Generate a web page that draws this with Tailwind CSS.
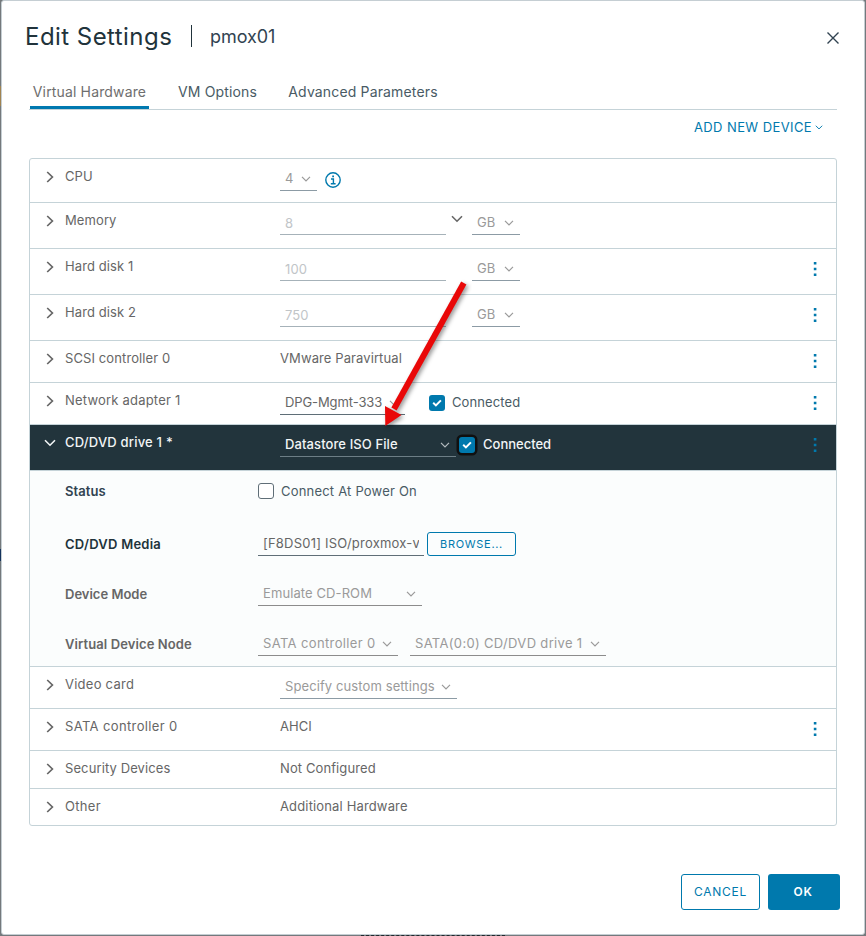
<!DOCTYPE html>
<html lang="en">
<head>
  <meta charset="UTF-8" />
  <meta name="viewport" content="width=device-width, initial-scale=1.0" />
  <title>Edit Settings</title>
  <script src="https://cdn.jsdelivr.net/npm/@tailwindcss/browser@4"></script>
</head>
<body class="relative h-[936px] w-[866px] overflow-hidden bg-[#74797c] px-px pb-px font-['Inter',sans-serif] text-[13px] leading-[18px] tracking-[0.1px] text-[#666]">
  <!-- Shared icons -->
  <svg class="hidden">
    <symbol id="right" viewBox="0 0 8 12"><path d="M1.2 1l5.2 5-5.2 5" fill="none" stroke="currentColor" stroke-width="1.7" /></symbol>
    <symbol id="down" viewBox="0 0 12 8"><path d="M1 1.2l5 5 5-5" fill="none" stroke="currentColor" stroke-width="1.6" /></symbol>
    <symbol id="caret" viewBox="0 0 10 6"><path d="M1 .8l4 4 4-4" fill="none" stroke="currentColor" stroke-width="1.2" /></symbol>
    <symbol id="dots" viewBox="0 0 4 16"><path d="M.8 1h2.6v2.4H.8zM.8 6.8h2.6v2.4H.8zM.8 12.6h2.6V15H.8z" fill="currentColor" /></symbol>
    <symbol id="check" viewBox="0 0 16 16"><path d="M4.2 7.8l2.7 2.6 5-5" fill="none" stroke="#fff" stroke-width="2" /></symbol>
  </svg>

  <div class="h-[935px] rounded-[3px] border border-[#c5ced3] bg-white pl-[27px]">
    <!-- Header -->
    <div class="flex h-[72px] items-center pr-[25px]">
      <h1 class="-ml-1 w-[166px] whitespace-nowrap text-2xl tracking-[0.45px] text-[#21333b]">Edit Settings</h1>
      <div class="mb-0.5 h-[22px] w-px bg-[#21333b]"></div>
      <span class="ml-[18px] text-lg tracking-[-0.05px] text-[#314351]">pmox01</span>
      <svg class="mt-px ml-auto size-3 text-[#314351]" viewBox="0 0 12 12"><path d="M.5.5l11 11M11.5.5l-11 11" stroke="currentColor" stroke-width="1.4" /></svg>
    </div>

    <!-- Tabs -->
    <div class="flex h-[37px] w-[808px] gap-[27px] border-b border-[#c5d3d8] pl-px text-sm tracking-[0.15px] text-[#495b65]">
      <div class="flex h-9 w-[119px] items-center justify-center whitespace-nowrap border-b-[3px] border-[#0079b0] pt-[5px] text-[#6e6e6e]">Virtual Hardware</div>
      <div class="flex h-9 w-[83px] items-center justify-center whitespace-nowrap pt-0.5">VM Options</div>
      <div class="flex h-9 w-[154px] items-center justify-center whitespace-nowrap pt-0.5">Advanced Parameters</div>
    </div>
    <div class="flex h-[48px] w-[808px] items-start justify-end pt-2 pr-3.5 tracking-[0.4px] text-[#0079ad]">
      <span>ADD NEW DEVICE</span><svg class="mt-[7px] ml-[3px] h-[5px] w-2"><use href="#caret" /></svg>
    </div>

    <!-- Devices -->
    <div class="w-[808px] rounded-[3px] border border-[#c5d3d8]">
      <div class="flex h-11 border-b border-[#c5d3d8] pl-4 pt-2">
        <svg class="mt-1 h-3 w-2"><use href="#right" /></svg>
        <div class="ml-[11px] w-[215px]">CPU</div>
        <div class="flex h-6 w-[37px] items-center justify-between border-b border-[#8c9ba5] pr-1.5 pb-px pl-[5px] text-[#9a9a9a]">4<svg class="mt-px h-1.5 w-2.5"><use href="#caret" /></svg></div>
        <svg class="ml-2 mt-[5px] size-4 text-[#0079ad]" viewBox="0 0 16 16" fill="none" stroke="currentColor" stroke-width="1.4"><circle cx="8" cy="8" r="7.2" /><path d="M6 7h2.4v4.5M5.8 11.8h4.8" /><path d="M7.2 4.4h1.8" stroke-width="1.8" /></svg>
      </div>
      <div class="flex h-[46px] border-b border-[#c5d3d8] pl-4 pt-2">
        <svg class="mt-1 h-3 w-2"><use href="#right" /></svg>
        <div class="ml-[11px] w-[215px]">Memory</div>
        <div class="flex h-6 w-[166px] items-center border-b border-[#a6b2b9] pl-[5px] text-[#c1c5c8]">8</div>
        <svg class="mt-1 ml-[5px] h-2 w-3"><use href="#down" /></svg>
        <div class="ml-[9px] flex h-6 w-12 items-center justify-between border-b border-[#8c9ba5] pr-1.5 pb-px pl-[5px] text-[#9a9a9a]">GB<svg class="mt-px h-1.5 w-2.5"><use href="#caret" /></svg></div>
      </div>
      <div class="flex h-[46px] border-b border-[#c5d3d8] pl-4 pt-2">
        <svg class="mt-1 h-3 w-2"><use href="#right" /></svg>
        <div class="ml-[11px] w-[215px]">Hard disk 1</div>
        <div class="flex h-6 w-[166px] items-center border-b border-[#a6b2b9] pl-[5px] text-[#c1c5c8]">100</div>
        <div class="ml-[26px] flex h-6 w-12 items-center justify-between border-b border-[#8c9ba5] pr-1.5 pb-px pl-[5px] text-[#9a9a9a]">GB<svg class="mt-px h-1.5 w-2.5"><use href="#caret" /></svg></div>
        <svg class="mt-1 mr-[19px] ml-auto h-4 w-1 text-[#0079ad]"><use href="#dots" /></svg>
      </div>
      <div class="flex h-[46px] border-b border-[#c5d3d8] pl-4 pt-2">
        <svg class="mt-1 h-3 w-2"><use href="#right" /></svg>
        <div class="ml-[11px] w-[215px]">Hard disk 2</div>
        <div class="flex h-6 w-[166px] items-center border-b border-[#a6b2b9] pl-[5px] text-[#c1c5c8]">750</div>
        <div class="ml-[26px] flex h-6 w-12 items-center justify-between border-b border-[#8c9ba5] pr-1.5 pb-px pl-[5px] text-[#9a9a9a]">GB<svg class="mt-px h-1.5 w-2.5"><use href="#caret" /></svg></div>
        <svg class="mt-1 mr-[19px] ml-auto h-4 w-1 text-[#0079ad]"><use href="#dots" /></svg>
      </div>
      <div class="flex h-[42px] border-b border-[#c5d3d8] pl-4 pt-2">
        <svg class="mt-1 h-3 w-2"><use href="#right" /></svg>
        <div class="ml-[11px] w-[215px]">SCSI controller 0</div>
        <div>VMware Paravirtual</div>
        <svg class="mt-1 mr-[19px] ml-auto h-4 w-1 text-[#0079ad]"><use href="#dots" /></svg>
      </div>
      <div class="flex h-[42px] border-b border-[#c5d3d8] pl-4 pt-2">
        <svg class="mt-1 h-3 w-2"><use href="#right" /></svg>
        <div class="ml-[11px] w-[215px] tracking-[0.2px]">Network adapter 1</div>
        <div class="flex h-6 w-[125px] items-center justify-between whitespace-nowrap border-b border-[#5f6e77] pr-1.5 pb-px pl-[5px] tracking-[-0.1px]">DPG-Mgmt-333<svg class="mt-px h-1.5 w-2.5 text-[#9a9a9a]"><use href="#caret" /></svg></div>
        <svg class="mt-1 ml-6 size-4 rounded-[3px] bg-[#0079ad]"><use href="#check" /></svg>
        <span class="mt-0.5 ml-[7px] text-[#495b65]">Connected</span>
        <svg class="mt-1 mr-[19px] ml-auto h-4 w-1 text-[#0079ad]"><use href="#dots" /></svg>
      </div>

      <!-- Expanded CD/DVD drive -->
      <div class="flex h-[46px] border-b border-[#c5d3d8] bg-[#22343c] pl-3.5 pt-2 font-medium text-[#f2f5f6]">
        <svg class="mt-1.5 h-2 w-3"><use href="#down" /></svg>
        <div class="ml-[9px] w-[215px] tracking-[0.2px]">CD/DVD drive 1 *</div>
        <div class="flex h-6 w-[176px] items-center justify-between border-b border-[#6d7e86] pr-1.5 pb-px pl-[5px]">Datastore ISO File<svg class="mt-px h-1.5 w-2.5 text-[#b3bbbf]"><use href="#caret" /></svg></div>
        <svg class="mt-1 ml-[3px] size-4 rounded-[3px] bg-[#0079ad] ring-[2.5px] ring-[#101010]"><use href="#check" /></svg>
        <span class="mt-0.5 ml-2 tracking-normal">Connected</span>
        <svg class="mt-1 mr-[19px] ml-auto h-4 w-1 text-[#0079ad]"><use href="#dots" /></svg>
      </div>
      <div class="h-[196px] border-b border-[#c5d3d8] bg-[#fbfdfd] pt-2 pl-[35px]">
        <div class="mb-[29px] flex h-6 items-center">
          <div class="w-[193px] pb-px font-semibold text-[#314351]">Status</div>
          <div class="size-4 rounded-[3px] border border-[#5f6e77] bg-white"></div>
          <span class="ml-[7px] pb-px tracking-[0.2px] text-[#495b65]">Connect At Power On</span>
        </div>
        <div class="mb-[26px] flex h-6 items-center">
          <div class="w-[193px] pb-px tracking-[0.25px] font-semibold text-[#21333b]">CD/DVD Media</div>
          <div class="h-6 w-[166px] whitespace-nowrap border-b border-[#5f6e77] px-[5px] pt-0.5"><div class="overflow-hidden tracking-[0.22px]">[F8DS01] ISO/proxmox-v</div></div>
          <div class="ml-[3px] flex h-6 w-[89px] items-center justify-center rounded-[3px] border border-[#0079ad] text-[11px] tracking-[0.7px] text-[#0079ad]">BROWSE...</div>
        </div>
        <div class="mb-[26px] flex h-6 items-center">
          <div class="w-[193px] pb-px tracking-normal font-semibold">Device Mode</div>
          <div class="flex h-6 w-[164px] items-center justify-between border-b border-[#8c8c8c] pr-1.5 pb-px pl-[5px] text-[#9a9a9a]">Emulate CD-ROM<svg class="mt-px h-1.5 w-2.5"><use href="#caret" /></svg></div>
        </div>
        <div class="flex h-6 items-center">
          <div class="w-[193px] pb-px font-semibold">Virtual Device Node</div>
          <div class="flex h-6 w-[140px] items-center justify-between whitespace-nowrap border-b border-[#8c8c8c] pr-1.5 pb-px pl-[5px] tracking-[0.37px] text-[#9a9a9a]">SATA controller 0<svg class="mt-px h-1.5 w-2.5"><use href="#caret" /></svg></div>
          <div class="ml-3 flex h-6 w-[196px] items-center justify-between whitespace-nowrap border-b border-[#8c8c8c] pr-1.5 pb-px pl-[5px] tracking-[0.33px] text-[#9a9a9a]">SATA(0:0) CD/DVD drive 1<svg class="mt-px h-1.5 w-2.5"><use href="#caret" /></svg></div>
        </div>
      </div>

      <div class="flex h-[42px] border-b border-[#c5d3d8] pl-4 pt-2">
        <svg class="mt-1 h-3 w-2"><use href="#right" /></svg>
        <div class="ml-[11px] w-[215px] tracking-[0.25px]">Video card</div>
        <div class="flex h-6 w-[177px] items-center justify-between whitespace-nowrap border-b border-[#8c9ba5] pr-1.5 pb-px pl-[5px] text-[#9a9a9a]">Specify custom settings<svg class="mt-px h-1.5 w-2.5"><use href="#caret" /></svg></div>
      </div>
      <div class="flex h-[42px] border-b border-[#c5d3d8] pl-4 pt-2">
        <svg class="mt-1 h-3 w-2"><use href="#right" /></svg>
        <div class="ml-[11px] w-[215px] tracking-[0.37px]">SATA controller 0</div>
        <div class="tracking-normal">AHCI</div>
        <svg class="mt-1 mr-[19px] ml-auto h-4 w-1 text-[#0079ad]"><use href="#dots" /></svg>
      </div>
      <div class="flex h-[38px] border-b border-[#c5d3d8] pl-4 pt-2">
        <svg class="mt-1 h-3 w-2"><use href="#right" /></svg>
        <div class="ml-[11px] w-[215px]">Security Devices</div>
        <div>Not Configured</div>
      </div>
      <div class="flex h-9 pl-4 pt-2">
        <svg class="mt-1 h-3 w-2"><use href="#right" /></svg>
        <div class="ml-[11px] w-[215px] tracking-[0.3px]">Other</div>
        <div class="tracking-[0.15px]">Additional Hardware</div>
      </div>
    </div>

    <!-- Footer -->
    <div class="mt-12 flex justify-end gap-2 pr-6">
      <button class="h-9 w-[79px] rounded-[3px] border border-[#0079ad] text-xs tracking-[0.7px] text-[#0079ad]">CANCEL</button>
      <button class="h-9 w-[72px] rounded-[3px] bg-[#0079ad] pr-0.5 text-xs font-semibold tracking-[0.7px] text-white">OK</button>
    </div>
  </div>

  <!-- Page behind the dialog -->
  <div class="absolute top-[935px] left-[361px] h-px w-[144px] border-t border-dashed border-[#20292e]"></div>
  <div class="absolute top-[86px] left-0 h-5 w-px bg-[#a18350]"></div>
  <div class="absolute top-[549px] left-0 h-3 w-px bg-[#14325c]"></div>

  <!-- Pointer arrow -->
  <svg class="absolute top-[270px] left-[370px] h-[170px] w-[110px] drop-shadow-[2px_2px_2px_rgba(0,0,0,0.4)]" viewBox="370 270 110 170">
    <path d="M463.8 283L394 409" stroke="#e90808" stroke-width="6" />
    <path d="M385 406L401.5 415L385.3 426z" fill="#e90808" />
  </svg>
</body>
</html>
